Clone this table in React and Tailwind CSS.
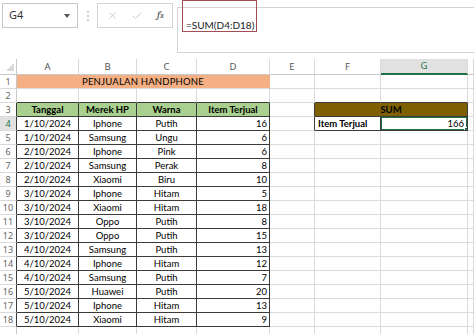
import { X, Check } from "lucide-react";

const GRID = "grid grid-cols-[17px_62px_58px_60px_73px_45px_66px_87px_1fr]";
const cellFont = { fontFamily: "Lato, 'Open Sans', sans-serif" };
const uiFont = { fontFamily: "'Noto Sans', 'Open Sans', sans-serif" };

const sales = [
  ["1/10/2024", "Iphone", "Putih", 16],
  ["1/10/2024", "Samsung", "Ungu", 6],
  ["2/10/2024", "Iphone", "Pink", 6],
  ["2/10/2024", "Samsung", "Perak", 8],
  ["2/10/2024", "Xiaomi", "Biru", 10],
  ["3/10/2024", "Iphone", "Hitam", 5],
  ["3/10/2024", "Xiaomi", "Hitam", 18],
  ["3/10/2024", "Oppo", "Putih", 8],
  ["3/10/2024", "Oppo", "Putih", 15],
  ["4/10/2024", "Samsung", "Putih", 13],
  ["4/10/2024", "Iphone", "Hitam", 12],
  ["4/10/2024", "Samsung", "Putih", 7],
  ["5/10/2024", "Huawei", "Putih", 20],
  ["5/10/2024", "Iphone", "Hitam", 13],
  ["5/10/2024", "Xiaomi", "Hitam", 9],
];

const total = sales.reduce((s, r) => s + r[3], 0);

// one worksheet cell; r / b switch the right and bottom edge to the dark table border
function Cell({ children, r, b, span = "", className = "" }) {
  return (
    <div
      style={cellFont}
      className={`relative flex items-center overflow-hidden whitespace-nowrap border-r border-b text-[9.5px] leading-none text-black ${span} ${
        r ? "border-r-[#3a3a3a]" : "border-r-[#dadada]"
      } ${b ? "border-b-[#3a3a3a]" : "border-b-[#dadada]"} ${className}`}
    >
      {children}
    </div>
  );
}

function RowNum({ n, active, dark }) {
  return (
    <div
      style={uiFont}
      className={`flex items-center justify-center border-r border-b border-b-[#dadada] text-[9px] leading-none ${
        active ? "bg-[#e1e1e1] text-[#217346]" : "text-[#666]"
      } ${dark ? "border-r-[#3a3a3a]" : "border-r-[#c8c8c8]"}`}
    >
      {n}
    </div>
  );
}

function FormulaBar() {
  return (
    <div className="relative flex h-[59px] items-start pt-[3px]" style={uiFont}>
      <div className="ml-[2px] flex h-[25px] w-[76px] items-center justify-between border border-[#c6c6c6] pl-[6px] pr-[7px]">
        <span className="text-[11px] text-[#333]">G4</span>
        <svg width="6" height="4" viewBox="0 0 6 4">
          <polygon points="0,0 6,0 3,4" fill="#555" />
        </svg>
      </div>
      <div className="flex h-[25px] w-[19px] items-center justify-center">
        <svg width="2" height="10" viewBox="0 0 2 10">
          <circle cx="1" cy="1" r="0.9" fill="#b5b5b5" />
          <circle cx="1" cy="5" r="0.9" fill="#b5b5b5" />
          <circle cx="1" cy="9" r="0.9" fill="#b5b5b5" />
        </svg>
      </div>
      <div className="flex h-[25px] w-[76px] items-center border border-[#d4d4d4]">
        <X size={11} strokeWidth={1.5} className="ml-[9px] text-[#b4b4b4]" />
        <Check size={12} strokeWidth={1.5} className="ml-[13px] text-[#b4b4b4]" />
        <span className="ml-[14px] font-serif text-[11px] italic text-[#444]">
          f<span className="text-[8px]">x</span>
        </span>
      </div>
      <div className="ml-[4px] mt-[4px] h-[46px] flex-1 border border-r-0 border-[#d4d4d4] pl-[8px] pt-[3px]">
        <span style={cellFont} className="text-[10px] text-[#222]">=SUM(D4:D18)</span>
      </div>
      {/* highlight frame around the formula */}
      <div className="absolute left-[182px] top-0 h-[32px] w-[75px] border-[1.5px] border-[#a24d58]" />
    </div>
  );
}

function ColumnHeaders() {
  const cols = ["A", "B", "C", "D", "E", "F", "G", ""];
  return (
    <div className={`${GRID} h-[16px]`} style={uiFont}>
      <div className="relative border-r border-b border-[#c8c8c8]">
        <svg width="8" height="8" viewBox="0 0 8 8" className="absolute bottom-[3px] right-[2px]">
          <polygon points="8,0 8,8 0,8" fill="#d8d8d8" />
        </svg>
      </div>
      {cols.map((c, i) =>
        c === "G" ? (
          <div
            key={i}
            className="flex items-center justify-center border-r border-r-[#dadada] border-b-2 border-b-[#217346] bg-[#e1e1e1] text-[9.5px] text-[#217346]"
          >
            {c}
          </div>
        ) : (
          <div
            key={i}
            className="flex items-center justify-center border-r border-b border-r-[#dadada] border-b-[#c8c8c8] text-[9.5px] text-[#555]"
          >
            {c}
          </div>
        )
      )}
    </div>
  );
}

export default function App() {
  return (
    <div className="h-[334px] w-[474px] overflow-hidden bg-white">
      <FormulaBar />
      <ColumnHeaders />

      {/* row 1: title */}
      <div className={`${GRID} h-[14px]`}>
        <RowNum n={1} />
        <Cell span="col-span-4" className="justify-center border-r-[#f4b084] bg-[#f4b084] tracking-[0.2px]">
          PENJUALAN HANDPHONE
        </Cell>
        <Cell />
        <Cell />
        <Cell />
        <Cell />
      </div>

      {/* row 2 */}
      <div className={`${GRID} h-[14px]`}>
        <RowNum n={2} />
        <Cell b />
        <Cell b />
        <Cell b />
        <Cell b />
        <Cell />
        <Cell b />
        <Cell b />
        <Cell />
      </div>

      {/* row 3: table head + SUM box */}
      <div className={`${GRID} h-[14px]`}>
        <RowNum n={3} dark />
        {["Tanggal", "Merek HP", "Warna", "Item Terjual"].map((h) => (
          <Cell key={h} r b className="justify-center bg-[#a9d08e] font-bold">
            {h}
          </Cell>
        ))}
        <Cell r />
        <Cell r b span="col-span-2" className="justify-center bg-[#7f6000] font-bold text-[#3b2b00]">
          SUM
        </Cell>
        <Cell />
      </div>

      {sales.map((row, i) => {
        const n = i + 4;
        return (
          <div key={n} className={`${GRID} h-[14px]`}>
            <RowNum n={n} active={n === 4} dark />
            <Cell r b className="justify-center">{row[0]}</Cell>
            <Cell r b className="justify-center">{row[1]}</Cell>
            <Cell r b className="justify-center">{row[2]}</Cell>
            <Cell r b className="justify-end pr-[2px]">{row[3]}</Cell>
            <Cell r={n === 4} />
            {n === 4 ? (
              <>
                <Cell r b className="pl-[3px] font-bold">Item Terjual</Cell>
                <Cell r b className="justify-end pr-[3px]">
                  {total}
                  <div className="absolute -left-px -top-px bottom-[-1px] right-[-1px] border-2 border-[#217346]" />
                  <div className="absolute bottom-[-2px] right-[-2px] h-[5px] w-[5px] border border-white bg-[#217346]" />
                </Cell>
              </>
            ) : (
              <>
                <Cell />
                <Cell />
              </>
            )}
            <Cell />
          </div>
        );
      })}

      {/* next row, cut by the window edge */}
      <div className={`${GRID} h-[14px]`}>
        <RowNum n="" />
        {Array.from({ length: 8 }).map((_, i) => (
          <Cell key={i} />
        ))}
      </div>
    </div>
  );
}
